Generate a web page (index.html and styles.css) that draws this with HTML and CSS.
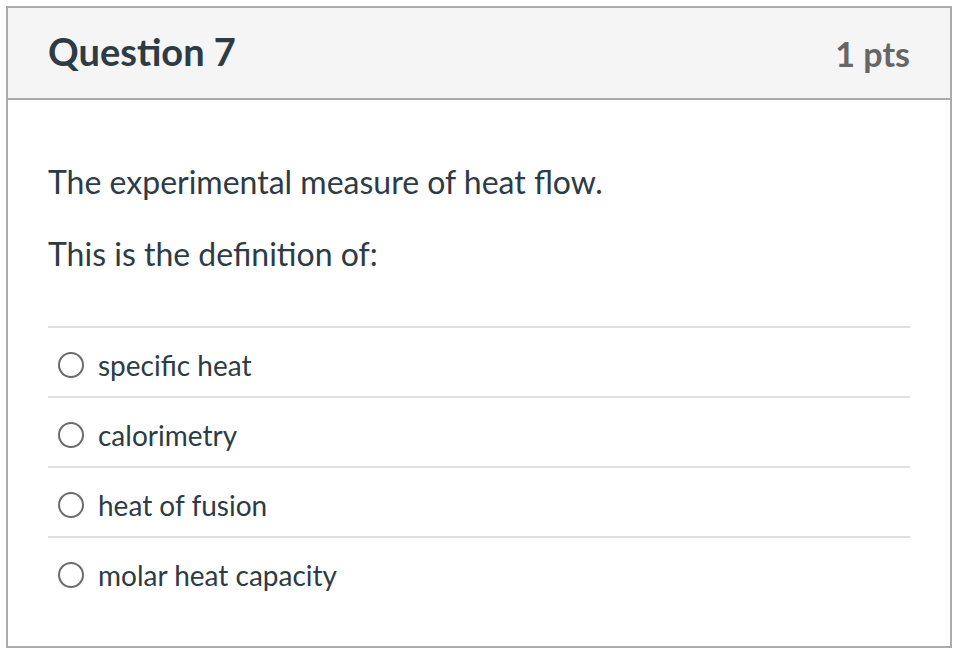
FILE: index.html
```html
<!DOCTYPE html>
<html>
<head>
<meta charset="utf-8">
<link rel="stylesheet" href="styles.css">
</head>
<body>
<div class="question">
  <div class="header">
    <h2 class="title">Question 7</h2>
    <span class="points">1 pts</span>
  </div>
  <div class="content">
    <p class="text first">The experimental measure of heat flow.</p>
    <p class="text">This is the definition of:</p>
    <div class="answers">
      <label class="answer"><span class="radio"></span><span>specific heat</span></label>
      <label class="answer"><span class="radio"></span><span>calorimetry</span></label>
      <label class="answer"><span class="radio"></span><span>heat of fusion</span></label>
      <label class="answer"><span class="radio"></span><span>molar heat capacity</span></label>
    </div>
  </div>
</div>
</body>
</html>
```
FILE: styles.css
```css
html, body {
  margin: 0;
  padding: 0;
  background: #fff;
}
body {
  padding: 6px 8px 0 6px;
  font-family: Lato, "Open Sans", sans-serif;
  color: #2d3b45;
}
.question {
  width: 942px;
  height: 638px;
  border: 2px solid #aaaaaa;
  box-sizing: content-box;
}
.header {
  height: 90px;
  background: #f5f5f5;
  border-bottom: 2px solid #aaaaaa;
  display: flex;
  align-items: center;
  justify-content: space-between;
  padding: 0 40px 0 40px;
}
.title {
  margin: 0 0 4px 0;
  font-size: 38px;
  font-weight: 700;
  color: #2d3b45;
}
.points {
  font-size: 34px;
  font-weight: 700;
  color: #666;
}
.content {
  padding: 0 40px;
}
.text {
  margin: 0;
  font-size: 32px;
  line-height: 36px;
}
.text.first {
  padding-top: 64px;
}
.text + .text {
  margin-top: 36px;
}
.answers {
  margin-top: 54px;
  border-top: 2px solid #e0e0e0;
}
.answer {
  display: flex;
  align-items: center;
  height: 62px;
  padding-top: 6px;
  border-bottom: 2px solid #e0e0e0;
  font-size: 28px;
  gap: 14px;
  padding-left: 10px;
}
.answer:last-child {
  border-bottom: none;
}
.radio {
  width: 22px;
  height: 22px;
  border: 2px solid #6b6b6b;
  border-radius: 50%;
  flex: none;
}
```
